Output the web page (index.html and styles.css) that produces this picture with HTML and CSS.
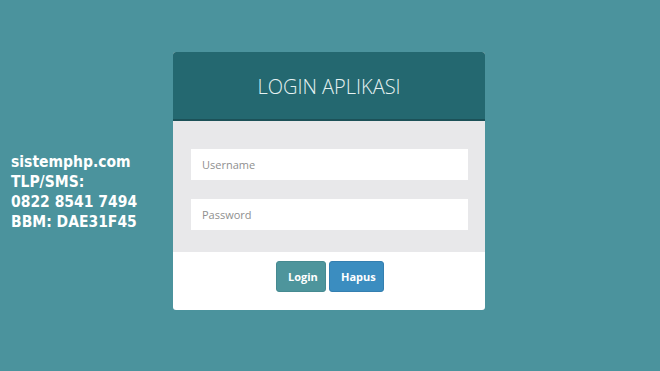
FILE: index.html
```html
<!DOCTYPE html>
<html lang="en">
<head>
    <meta charset="UTF-8">
    <meta name="viewport" content="width=device-width, initial-scale=1.0">
    <title>Login Aplikasi</title>
    <link rel="stylesheet" href="styles.css">
</head>
<body>
    <div class="page">
        <div class="contact">
            <p>sistemphp.com</p>
            <p>TLP/SMS:</p>
            <p>0822 8541 7494</p>
            <p>BBM: DAE31F45</p>
        </div>

        <div class="login-box">
            <div class="login-header">
                <h1>LOGIN APLIKASI</h1>
            </div>
            <form class="login-body">
                <input type="text" class="form-control" placeholder="Username">
                <input type="password" class="form-control" placeholder="Password">
            </form>
            <div class="login-footer">
                <button class="btn btn-login">Login</button>
                <button class="btn btn-reset">Hapus</button>
            </div>
        </div>
    </div>
</body>
</html>
```

FILE: styles.css
```css
* {
    margin: 0;
    padding: 0;
    box-sizing: border-box;
}

body {
    font-family: 'Open Sans', sans-serif;
    background-color: #4b939d;
    width: 660px;
    height: 371px;
    overflow: hidden;
}

.page {
    position: relative;
    height: 100%;
    padding-top: 52px;
}

.contact {
    position: absolute;
    left: 11px;
    top: 152px;
    color: #ffffff;
    font-family: 'DejaVu Sans Condensed', 'DejaVu Sans', sans-serif;
    font-stretch: condensed;
    font-weight: bold;
    font-size: 15.5px;
    line-height: 20px;
}

.login-box {
    width: 312px;
    margin-left: 173px;
    background-color: #ffffff;
    border-radius: 3px;
    overflow: hidden;
}

.login-header {
    background-color: #246870;
    height: 69px;
    border-bottom: 2px solid #1c5158;
    display: flex;
    align-items: center;
    justify-content: center;
}

.login-header h1 {
    color: #e6f2f2;
    font-weight: 300;
    font-size: 20px;
    padding-top: 2px;
}

.login-body {
    background-color: #e8e8ea;
    padding: 28px 17px 22px 18px;
    display: flex;
    flex-direction: column;
    gap: 19px;
}

.form-control {
    height: 31px;
    border: none;
    background-color: #ffffff;
    padding: 0 11px;
    font-family: 'Open Sans', sans-serif;
    font-size: 11px;
    color: #555;
}

.form-control::placeholder {
    color: #8f8f8f;
}

.login-footer {
    height: 58px;
    display: flex;
    justify-content: center;
    align-items: flex-start;
    gap: 3px;
    padding-top: 9px;
    padding-left: 2px;
}

.btn {
    height: 31px;
    border: 1px solid transparent;
    border-radius: 3px;
    color: #ffffff;
    font-family: 'Open Sans', sans-serif;
    font-weight: bold;
    font-size: 11px;
    padding: 0 11px;
}

.btn-login {
    width: 50px;
    background-color: #4e959c;
    border-color: #468a91;
}

.btn-reset {
    width: 55px;
    background-color: #3b8dc0;
    border-color: #347fb0;
}
```
